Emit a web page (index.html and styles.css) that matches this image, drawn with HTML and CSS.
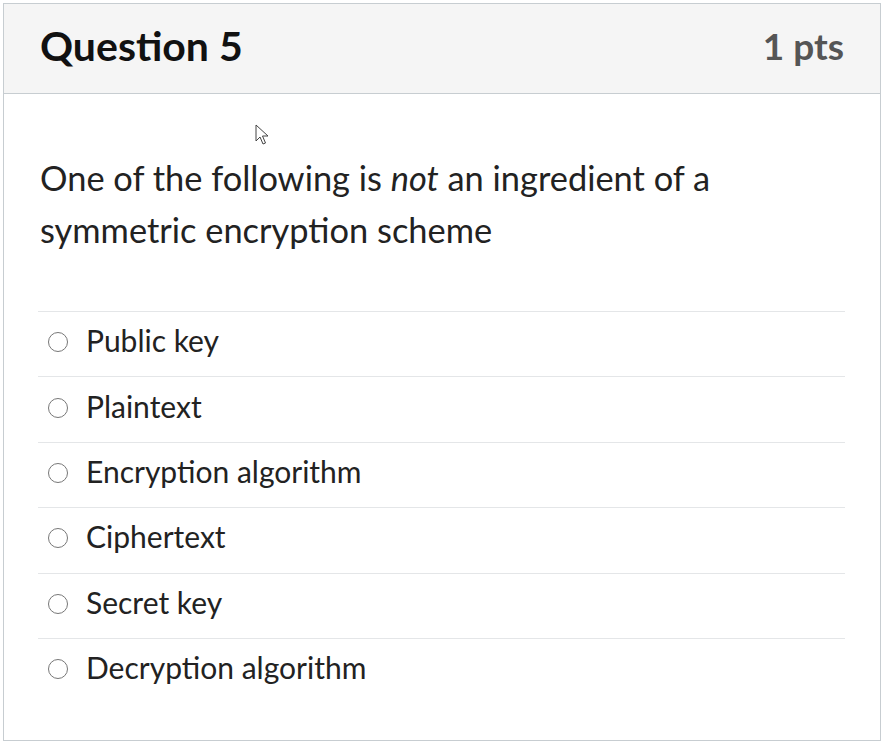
FILE: index.html
```html
<!DOCTYPE html>
<html>
<head>
<meta charset="utf-8">
<link rel="stylesheet" href="styles.css">
</head>
<body>
<div class="card">
  <div class="header">
    <div class="title">Question 5</div>
    <div class="pts">1 pts</div>
  </div>
  <div class="content">
    <p class="question">One of the following is <em>not</em> an ingredient of a symmetric encryption scheme</p>
    <div class="answers">
      <div class="answer"><span class="radio"></span><span class="label">Public key</span></div>
      <div class="answer"><span class="radio"></span><span class="label">Plaintext</span></div>
      <div class="answer"><span class="radio"></span><span class="label">Encryption algorithm</span></div>
      <div class="answer"><span class="radio"></span><span class="label">Ciphertext</span></div>
      <div class="answer"><span class="radio"></span><span class="label">Secret key</span></div>
      <div class="answer"><span class="radio"></span><span class="label">Decryption algorithm</span></div>
    </div>
  </div>
  <svg class="cursor" width="14" height="22" viewBox="0 0 14 22"><path d="M1 1 L1 17 L5 13 L8 20 L10.5 19 L7.5 12 L13 12 Z" fill="#fff" stroke="#444" stroke-width="1"/></svg>
</div>
</body>
</html>
```
FILE: styles.css
```css
html, body { margin: 0; padding: 0; background: #fff; }
body { font-family: Lato, "Open Sans", sans-serif; color: #2d3b45; }
.card {
  position: relative;
  margin: 3px 2px 0 3px;
  width: 876px;
  height: 736px;
  border: 1px solid #c7cdd1;
  box-sizing: content-box;
}
.header {
  height: 90px;
  box-sizing: border-box;
  padding: 0 36px 6px 36px;
  background: #f5f5f5;
  border-bottom: 1px solid #c7cdd1;
  display: flex;
  align-items: center;
  justify-content: space-between;
}
.title { font-size: 41px; font-weight: 700; color: #111; }
.pts { font-size: 37px; font-weight: 700; color: #555; }
.content { padding: 0 35px 0 34px; }
.question {
  margin: 0;
  padding: 58px 0 0 2px;
  font-size: 34.4px;
  line-height: 52px;
  color: #222;
}
.question em { font-style: italic; }
.answers { margin-top: 55px; }
.answer {
  display: flex;
  align-items: center;
  height: 64.4px;
  box-sizing: content-box;
  border-top: 1px solid #e4e6e8;
  padding-left: 10px;
}
.radio {
  width: 20px;
  height: 20px;
  border: 1.5px solid #777;
  border-radius: 50%;
  box-sizing: border-box;
  margin-right: 18px;
  margin-top: -4px;
}
.label { font-size: 30px; color: #222; margin-top: -8px; }
.cursor { position: absolute; left: 251px; top: 120px; }
```
